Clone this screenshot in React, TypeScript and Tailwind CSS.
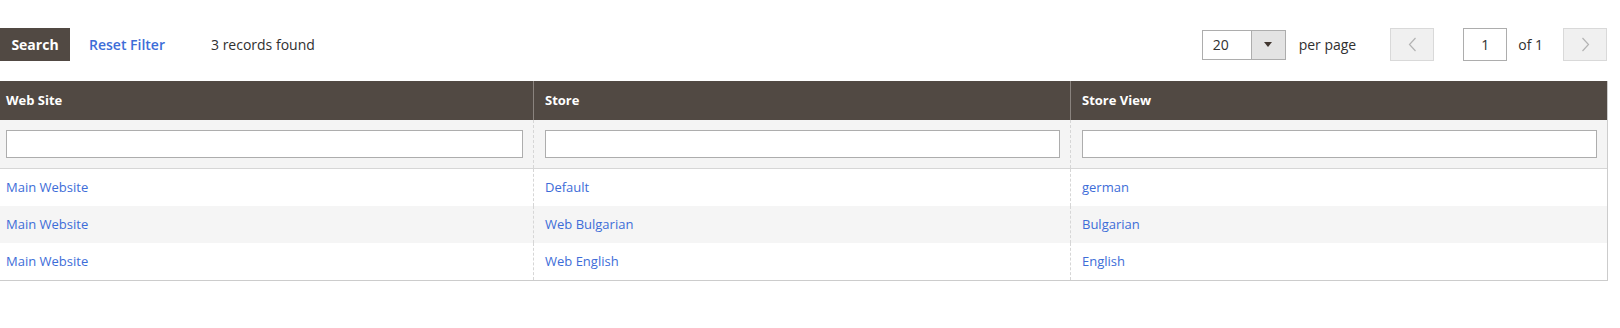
import React from 'react';

const rows = [
  { site: 'Main Website', store: 'Default', view: 'german' },
  { site: 'Main Website', store: 'Web Bulgarian', view: 'Bulgarian' },
  { site: 'Main Website', store: 'Web English', view: 'English' },
];

const Chevron: React.FC<{ dir: 'left' | 'right' }> = ({ dir }) => (
  <svg width="9" height="15" viewBox="0 0 9 15" fill="none">
    <polyline
      points={dir === 'left' ? '7.5,1 1.5,7.5 7.5,14' : '1.5,1 7.5,7.5 1.5,14'}
      stroke="#b3b3b3"
      strokeWidth="1.2"
    />
  </svg>
);

const App: React.FC = () => {
  return (
    <div className="w-[1620px] h-[328px] bg-white pt-[28px] font-['Open_Sans',sans-serif] text-[#303030]">
      {/* Toolbar */}
      <div className="flex items-center h-[33px] pr-[13px]">
        <button className="h-[33px] w-[70px] bg-[#514943] text-white font-bold text-[14px] flex items-center justify-center">
          Search
        </button>
        <a className="ml-[19px] text-[14px] font-semibold text-[#3d6dd8]">Reset Filter</a>
        <span className="ml-[46px] text-[14px]">3 records found</span>

        <div className="ml-auto flex items-center">
          <div className="flex h-[30px] w-[84px] border border-[#adadad]">
            <div className="flex-1 flex items-center pl-[10px] text-[14px]">20</div>
            <div className="w-[34px] bg-[#e3e3e3] border-l border-[#adadad] flex items-center justify-center">
              <div className="w-0 h-0 border-l-[4px] border-r-[4px] border-t-[5px] border-l-transparent border-r-transparent border-t-[#41362f]" />
            </div>
          </div>
          <span className="ml-[13px] text-[14px]">per page</span>
          <button className="ml-[34px] w-[44px] h-[33px] bg-[#f0f0f0] border border-[#d9d9d9] flex items-center justify-center">
            <Chevron dir="left" />
          </button>
          <div className="ml-[29px] w-[44px] h-[33px] border border-[#adadad] flex items-center justify-center text-[14px]">
            1
          </div>
          <span className="ml-[11px] text-[14px]">of 1</span>
          <button className="ml-[20px] w-[44px] h-[33px] bg-[#f0f0f0] border border-[#d9d9d9] flex items-center justify-center">
            <Chevron dir="right" />
          </button>
        </div>
      </div>

      {/* Grid */}
      <div className="mt-[20px] w-[1608px] border-r border-b border-[#cccccc] text-[13px]">
        <div className="grid grid-cols-[533px_537px_1fr] h-[39px] bg-[#514943] text-white font-bold">
          <div className="flex items-center pl-[6px]">Web Site</div>
          <div className="flex items-center pl-[11px] border-l border-[#8a837e]">Store</div>
          <div className="flex items-center pl-[11px] border-l border-[#8a837e]">Store View</div>
        </div>
        <div className="grid grid-cols-[533px_537px_1fr] h-[49px] bg-[#f4f4f4] border-b border-[#d6d6d6]">
          <div className="flex items-center pl-[6px] pr-[10px]">
            <input className="w-full h-[28px] bg-white border border-[#adadad] outline-none" />
          </div>
          <div className="flex items-center pl-[11px] pr-[10px] border-l border-dashed border-[#d6d6d6]">
            <input className="w-full h-[28px] bg-white border border-[#adadad] outline-none" />
          </div>
          <div className="flex items-center pl-[11px] pr-[10px] border-l border-dashed border-[#d6d6d6]">
            <input className="w-full h-[28px] bg-white border border-[#adadad] outline-none" />
          </div>
        </div>
        {rows.map((r, i) => (
          <div
            key={i}
            className={`grid grid-cols-[533px_537px_1fr] h-[37px] text-[#3d6dd8] ${i % 2 === 1 ? 'bg-[#f5f5f5]' : 'bg-white'}`}
          >
            <div className="flex items-center pl-[6px]">{r.site}</div>
            <div className="flex items-center pl-[11px] border-l border-dashed border-[#d6d6d6]">{r.store}</div>
            <div className="flex items-center pl-[11px] border-l border-dashed border-[#d6d6d6]">{r.view}</div>
          </div>
        ))}
      </div>
    </div>
  );
};

export default App;
